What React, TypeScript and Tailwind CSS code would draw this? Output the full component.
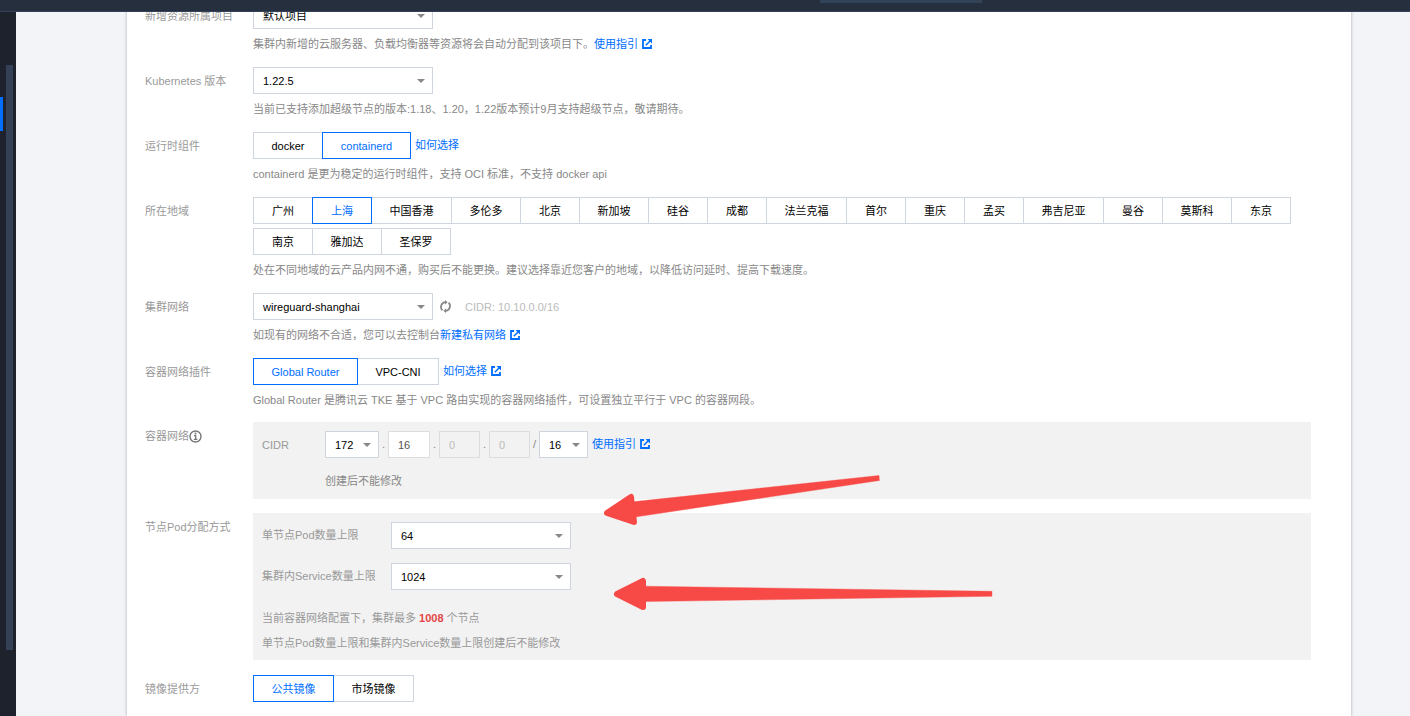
import { useState } from "react";
import type { ReactNode } from "react";

const ExternalIcon = () => (
  <svg className="inline-block size-[10px] ml-1 -mt-[3px] align-middle" viewBox="0 0 10 10" fill="none">
    <path d="M4 1H1v8h8V6" stroke="#006eff" strokeWidth="1.8" />
    <path d="M8.5 1.500L3.800 6.200" stroke="#006eff" strokeWidth="1.5" />
    <path d="M5.500 0H10v4.500z" fill="#006eff" />
  </svg>
);

const RefreshIcon = () => (
  <svg className="size-[13px]" viewBox="0 0 13 13" fill="none">
    <path d="M3.400 10.300A4.800 4.800 0 0 1 6.600 2.100" stroke="#888" strokeWidth="1.700" />
    <path d="M9.600 2.700a4.800 4.800 0 0 1-3.200 8.200" stroke="#888" strokeWidth="1.700" />
    <path d="M6 0l2.600 2.300L6 4.600zM7 8.400l-2.600 2.300L7 13z" fill="#888" />
  </svg>
);

const InfoIcon = () => (
  <svg className="size-[13px]" viewBox="0 0 13 13" fill="none">
    <circle cx="6.5" cy="6.5" r="5.500" stroke="#777" strokeWidth="1.400" />
    <path d="M5 5.700h1.700v3.500M4.800 9.400h3.600" stroke="#777" strokeWidth="1.300" />
    <circle cx="6.5" cy="3.600" r="1" fill="#777" />
  </svg>
);

const DocLink = ({ children, external }: { children: ReactNode; external?: boolean }) => (
  <a href="#" className="text-[#006eff] whitespace-nowrap">
    {children}
    {external && <ExternalIcon />}
  </a>
);

const Select = ({
  id,
  label,
  options,
  className = "w-[180px]",
}: {
  id: string;
  label?: string;
  options: string[];
  className?: string;
}) => (
  <div className={`relative h-[27px] ${className}`}>
    <select
      id={id}
      aria-label={label}
      className="block w-full h-full appearance-none rounded-none border border-[#cfd5de] bg-white pl-[9px] pt-0.5 text-black outline-none"
    >
      {options.map((option) => (
        <option key={option}>{option}</option>
      ))}
    </select>
    <svg className="absolute right-2 top-[12px] w-2 h-1 pointer-events-none" viewBox="0 0 8 4">
      <path d="M0 0h8L4 4z" fill="#888" />
    </svg>
  </div>
);

type Choice = { label: string; width: string };

const ButtonGroup = ({
  label,
  choices,
  initial,
}: {
  label: string;
  choices: Choice[];
  initial: string;
}) => {
  const [selected, setSelected] = useState(initial);

  return (
    <div role="group" aria-label={label} className="flex flex-wrap gap-y-1 pl-px">
      {choices.map((choice) => (
        <button
          key={choice.label}
          type="button"
          aria-pressed={selected === choice.label}
          onClick={() => setSelected(choice.label)}
          className={`h-[27px] -ml-px border pt-0.5 whitespace-nowrap ${choice.width} ${
            selected === choice.label
              ? "relative border-[#006eff] text-[#006eff]"
              : "border-[#cfd5de] text-black"
          }`}
        >
          {choice.label}
        </button>
      ))}
    </div>
  );
};

const Row = ({
  label,
  htmlFor,
  icon,
  className = "mb-[14px]",
  children,
}: {
  label: string;
  htmlFor?: string;
  icon?: ReactNode;
  className?: string;
  children: ReactNode;
}) => (
  <div className={`flex ${className}`}>
    <div className="w-[108px] h-7 shrink-0 flex items-center text-[#999]">
      {htmlFor ? <label htmlFor={htmlFor}>{label}</label> : <span>{label}</span>}
      {icon}
    </div>
    <div className="flex-1 min-w-0">{children}</div>
  </div>
);

const Hint = ({ children }: { children: ReactNode }) => (
  <p className="mt-[7px] pb-px leading-4 text-[#888]">{children}</p>
);

const regions: Choice[] = [
  "广州",
  "上海",
  "中国香港",
  "多伦多",
  "北京",
  "新加坡",
  "硅谷",
  "成都",
  "法兰克福",
  "首尔",
  "重庆",
  "孟买",
  "弗吉尼亚",
  "曼谷",
  "莫斯科",
  "东京",
  "南京",
  "雅加达",
  "圣保罗",
].map((label) => ({
  label,
  width: label.length === 2 ? "w-[60px]" : label.length === 3 ? "w-[70px]" : "w-[81px]",
}));

const octet = "h-[27px] border border-[#ddd] pl-[9px] pt-px outline-none";

const Arrows = () => (
  <svg
    className="absolute left-[600px] top-[470px] w-[400px] h-[145px] pointer-events-none"
    viewBox="0 0 400 145"
    fill="#f74a46"
    stroke="#f74a46"
    strokeLinejoin="round"
  >
    <path d="M7 43L31 27l3 25z" strokeWidth="6" />
    <path d="M33 31.800L279 5.500l.4 5L35 47z" strokeWidth="0.4" />
    <path d="M17 124l26-13v26z" strokeWidth="6" />
    <path d="M44 116.200L392 121.300v5L44 131.600z" strokeWidth="0.4" />
  </svg>
);

export default function App() {
  return (
    <div className="relative flex h-screen overflow-hidden bg-[#f2f4f8] text-[11px] font-['Liberation_Sans','Noto_Sans_CJK_SC',sans-serif]">
      <header className="fixed inset-x-0 top-0 z-10 h-3 border-b border-[#34435a] bg-[#262f3e]">
        <div className="mx-auto h-[3px] w-[162px] translate-x-[196px] bg-[#324358]" />
      </header>

      {/* Collapsed side menu */}
      <aside className="flex w-4 shrink-0 bg-[#1e222d]">
        <div className="mt-[97px] h-[34px] w-[3px] bg-[#006eff]" />
        <div className="ml-[3px] mt-[65px] h-[585px] w-[7px] bg-[#334056]" />
      </aside>

      <main className="flex-1 min-w-0 pl-[111px] pr-[59px]">
        <form className="min-h-full bg-white pl-[18px] pr-10 pt-0.5 shadow-[0_0_3px_rgba(54,58,80,0.4)]">
          <Row label="新增资源所属项目" htmlFor="project">
            <Select id="project" options={["默认项目"]} />
            <Hint>
              集群内新增的云服务器、负载均衡器等资源将会自动分配到该项目下。
              <DocLink external>使用指引</DocLink>
            </Hint>
          </Row>

          <Row label="Kubernetes 版本" htmlFor="version">
            <Select id="version" options={["1.22.5", "1.20.6", "1.18.4"]} />
            <Hint>当前已支持添加超级节点的版本:1.18、1.20，1.22版本预计9月支持超级节点，敬请期待。</Hint>
          </Row>

          <Row label="运行时组件">
            <div className="flex items-center gap-1">
              <ButtonGroup
                label="运行时组件"
                initial="containerd"
                choices={[
                  { label: "docker", width: "w-[70px]" },
                  { label: "containerd", width: "w-[89px]" },
                ]}
              />
              <DocLink>如何选择</DocLink>
            </div>
            <Hint>containerd 是更为稳定的运行时组件，支持 OCI 标准，不支持 docker api</Hint>
          </Row>

          <Row label="所在地域">
            <ButtonGroup label="所在地域" initial="上海" choices={regions} />
            <Hint>
              处在不同地域的云产品内网不通，购买后不能更换。建议选择靠近您客户的地域，以降低访问延时、提高下载速度。
            </Hint>
          </Row>

          <Row label="集群网络" htmlFor="vpc">
            <div className="flex items-center">
              <Select id="vpc" options={["wireguard-shanghai"]} />
              <button type="button" aria-label="刷新" className="ml-[6px]">
                <RefreshIcon />
              </button>
              <span className="ml-[13px] pt-0.5 text-[#bbb]">CIDR: 10.10.0.0/16</span>
            </div>
            <Hint>
              如现有的网络不合适，您可以去控制台<DocLink external>新建私有网络</DocLink>
            </Hint>
          </Row>

          <Row label="容器网络插件" className="mb-[13px]">
            <div className="flex items-center gap-1">
              <ButtonGroup
                label="容器网络插件"
                initial="Global Router"
                choices={[
                  { label: "Global Router", width: "w-[105px]" },
                  { label: "VPC-CNI", width: "w-[82px]" },
                ]}
              />
              <DocLink external>如何选择</DocLink>
            </div>
            <Hint>Global Router 是腾讯云 TKE 基于 VPC 路由实现的容器网络插件，可设置独立平行于 VPC 的容器网段。</Hint>
          </Row>

          <Row label="容器网络" icon={<InfoIcon />}>
            <div className="bg-[#f2f2f2] h-[77px] pl-[9px] pt-[9px] text-[#888]">
              <div className="flex items-center">
                <span className="w-[63px] pt-0.5 text-[#999]">CIDR</span>
                <Select id="cidr-a" label="CIDR 第一段" options={["172", "10", "192"]} className="w-[54px]" />
                <span className="w-[9px] text-center">.</span>
                <input aria-label="CIDR 第二段" defaultValue="16" className={`${octet} w-[42px] bg-white text-[#555]`} />
                <span className="w-[9px] text-center">.</span>
                <input aria-label="CIDR 第三段" defaultValue="0" disabled className={`${octet} w-[41px] text-[#bbb]`} />
                <span className="w-[9px] text-center">.</span>
                <input aria-label="CIDR 第四段" defaultValue="0" disabled className={`${octet} w-[41px] text-[#bbb]`} />
                <span className="w-[9px] text-center">/</span>
                <Select id="cidr-mask" label="掩码" options={["16", "17", "18"]} className="w-[49px] mr-1" />
                <DocLink external>使用指引</DocLink>
              </div>
              <p className="ml-[63px] mt-[15px] leading-4">创建后不能修改</p>
            </div>
          </Row>

          <Row label="节点Pod分配方式" className="mb-[15px]">
            <div className="bg-[#f2f2f2] h-[147px] pl-[9px] pt-[9px] text-[#999]">
              <div className="flex items-center mb-[14px]">
                <label htmlFor="pods" className="w-[129px]">单节点Pod数量上限</label>
                <Select id="pods" options={["64", "128", "256"]} />
              </div>
              <div className="flex items-center">
                <label htmlFor="services" className="w-[129px]">集群内Service数量上限</label>
                <Select id="services" options={["1024", "2048"]} />
              </div>
              <p className="mt-5 leading-4">
                当前容器网络配置下，集群最多 <b className="text-[#e54545]">1008</b> 个节点
              </p>
              <p className="mt-[9px] leading-4">单节点Pod数量上限和集群内Service数量上限创建后不能修改</p>
            </div>
          </Row>

          <Row label="镜像提供方">
            <ButtonGroup
              label="镜像提供方"
              initial="公共镜像"
              choices={[
                { label: "公共镜像", width: "w-[81px]" },
                { label: "市场镜像", width: "w-[81px]" },
              ]}
            />
          </Row>
        </form>
      </main>

      <Arrows />
    </div>
  );
}
